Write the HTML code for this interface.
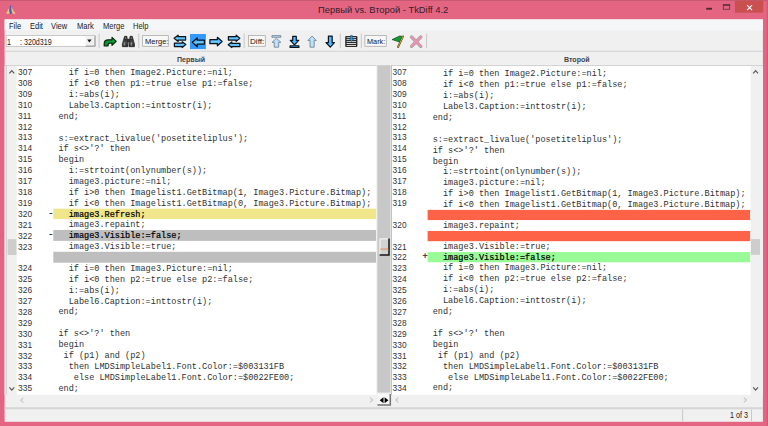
<!DOCTYPE html>
<html lang="ru">
<head>
<meta charset="utf-8">
<title>Первый vs. Второй - TkDiff 4.2</title>
<style>
*{box-sizing:border-box;margin:0;padding:0}
html,body{width:768px;height:426px;overflow:hidden}
body{position:relative;background:#e46582;font-family:"Liberation Sans",sans-serif;color:#000}
.abs,.row,.ln,.mi,.lt,svg{position:absolute}
#bg{left:0;top:0}
#title{left:-0.8px;top:5px;width:768px;text-align:center;font-size:9.35px;line-height:11px;color:#33202a;white-space:nowrap}
.mi{top:21.2px;font-size:8.5px;line-height:10px;white-space:nowrap;color:#1a1a1a;transform:scaleX(.885);transform-origin:0 0}
.lt{top:36.5px;font-size:8px;line-height:9.5px;color:#14141c;white-space:nowrap;transform-origin:0 0}
.ct{top:36.7px;font-size:8.3px;line-height:10px;white-space:pre;color:#1a1a1a;transform:scaleX(.86);transform-origin:0 0}
.hdr{top:54.9px;font-size:7.6px;line-height:10px;font-weight:bold;color:#444;white-space:nowrap;transform:scaleX(.93);transform-origin:0 0}
.row{left:0;width:100%;height:10.905px;padding-top:1.2px;line-height:10.905px;font-family:"Liberation Mono",monospace;font-size:8.550px;white-space:pre;color:#303030}
.row.hl{color:#000;-webkit-text-stroke:0.22px #000}
#lcode{left:53.3px;top:0;width:322.8px;height:426px;overflow:hidden}
#rcode{left:427.6px;top:0;width:322.5px;height:426px;overflow:hidden}
.ln{font-size:8.35px;letter-spacing:.12px;line-height:10.905px;height:10.905px;color:#333;white-space:nowrap}
.mk{font-family:"Liberation Mono",monospace;font-size:8.550px;line-height:10.905px;height:10.905px;color:#111;-webkit-text-stroke:0.2px #111}
#status{left:730px;top:411.2px;font-size:8.2px;line-height:10px;color:#1a1a1a;white-space:nowrap;transform:scaleX(.88);transform-origin:0 0}
</style>
</head>
<body>
<svg id="bg" width="768" height="426" viewBox="0 0 768 426">
<!-- window frame -->
<rect width="768" height="426" fill="#e46582"/>
<rect width="768" height="0.8" fill="#c2556f"/>
<rect x="766.7" width="1.3" height="426" fill="#cf5b76"/>
<!-- app icon -->
<path d="M11.4 4.4 C9.2 6.6 8.6 10 9.8 13.7 L12.1 13.7 C10.6 10.4 10.6 7.2 11.4 4.4Z" fill="#3560c8"/>
<path d="M9.3 7.6 L6 13.7 L9.6 13.7 C9 11.6 8.9 9.6 9.3 7.6Z" fill="#efc57c"/>
<path d="M11.7 7 C11.6 9.4 12 11.6 12.7 13.7 L15.6 13.7 C13.8 11.6 12.5 9.4 11.7 7Z" fill="#efc57c"/>
<!-- caption buttons -->
<rect x="706.2" y="7.8" width="5.8" height="1.9" fill="#4e2a36"/>
<rect x="723.3" y="4.95" width="6.4" height="4.3" fill="none" stroke="#5a3040" stroke-width="0.8"/>
<rect x="722.9" y="4.2" width="7.2" height="1.5" fill="#5a3040"/>
<rect x="734.9" y="0.8" width="28.3" height="11.9" fill="#c9504f"/>
<path d="M747.1 5.1 L752.1 10.1 M752.1 5.1 L747.1 10.1" stroke="#fff" stroke-width="1.05" fill="none"/>
<!-- client -->
<rect x="4.6" y="19.4" width="758.3" height="402.4" fill="#f0f0f0"/>
<rect x="4.6" y="19.4" width="758.3" height="11.1" fill="#f5f6f7"/>
<!-- combobox -->
<rect x="6.2" y="35.5" width="89" height="11" fill="#fff" stroke="#bdbdbd" stroke-width="0.8"/>
<rect x="85.6" y="36.2" width="9.2" height="9.8" fill="#f0f0f0"/>
<path d="M85.8 46.1 H94.9 V36.2" stroke="#8c8c8c" stroke-width="0.9" fill="none"/>
<path d="M87.2 39.6 H91.6 L89.4 42.4Z" fill="#111"/>
<!-- toolbar separators -->
<g fill="#cbcbcb">
<rect x="98.6" y="33.6" width="1.1" height="14.6"/><rect x="138.2" y="33.6" width="1.1" height="14.6"/>
<rect x="243.6" y="33.6" width="1.1" height="14.6"/><rect x="339.8" y="33.6" width="1.1" height="14.6"/>
<rect x="360.8" y="33.6" width="1.1" height="14.6"/><rect x="426" y="33.6" width="1.1" height="14.6"/>
</g>
<!-- toolbar labels -->
<g fill="#f8f8f8" stroke="#ababab" stroke-width="0.8">
<rect x="142.6" y="35.6" width="25.7" height="10.7"/>
<rect x="248.5" y="35.6" width="16.8" height="10.7"/>
<rect x="364.9" y="35.6" width="21.4" height="10.7"/>
</g>
<!-- selected button -->
<rect x="190" y="34" width="15.9" height="15.1" fill="#3399ff"/>
<defs>
<linearGradient id="gb" x1="0" y1="0" x2="0" y2="1"><stop offset="0" stop-color="#1f9cf0"/><stop offset=".5" stop-color="#6cc8ff"/><stop offset="1" stop-color="#1f9cf0"/></linearGradient>
<linearGradient id="gv" x1="0" y1="0" x2="1" y2="0"><stop offset="0" stop-color="#1f9cf0"/><stop offset=".5" stop-color="#58bcff"/><stop offset="1" stop-color="#1f9cf0"/></linearGradient>
<linearGradient id="gl" x1="0" y1="0" x2="1" y2="0"><stop offset="0" stop-color="#93ccf6"/><stop offset=".5" stop-color="#bfe4ff"/><stop offset="1" stop-color="#93ccf6"/></linearGradient>
<linearGradient id="gg" x1="0" y1="0" x2="0" y2="1"><stop offset="0" stop-color="#15b040"/><stop offset="1" stop-color="#0a8026"/></linearGradient>
<linearGradient id="gk" x1="0" y1="0" x2="0" y2="1"><stop offset="0" stop-color="#1c1c1c"/><stop offset=".6" stop-color="#4a4a4a"/><stop offset="1" stop-color="#222"/></linearGradient>
</defs>
<!-- green redo arrow -->
<path d="M104.2 46 L104.2 43.6 C104.2 41 106 39.8 108.4 39.8 L112 39.8 L112 37.4 L116.2 41.4 L112 45.4 L112 43.1 L109.8 43.1 C108.4 43.1 108 43.9 108 46 Z" fill="url(#gg)" stroke="#06260c" stroke-width="1.15" stroke-linejoin="round"/>
<!-- binoculars -->
<g fill="url(#gk)" stroke="#1a1a1a" stroke-width="0.6" stroke-linejoin="round">
<path d="M124.6 36.3 L126.9 36.3 L127.2 38.4 L127.9 40.5 L127.9 46.7 L122.3 46.7 L122.3 44 L123.9 38.4 Z"/>
<path d="M132.3 36.3 L130 36.3 L129.7 38.4 L129 40.5 L129 46.7 L134.5 46.7 L134.5 44 L132.9 38.4 Z"/>
<rect x="127.6" y="39.2" width="1.7" height="2.6"/>
</g>
<rect x="123.7" y="42.4" width="1.5" height="3.2" fill="#8e8e8e"/><rect x="130.6" y="42.4" width="1.5" height="3.2" fill="#8e8e8e"/>
<rect x="125.2" y="37" width="1" height="2" fill="#777"/><rect x="130.7" y="37" width="1" height="2" fill="#777"/>
<!-- merge icons -->
<g stroke="#0a141e" stroke-width="1.25" stroke-linejoin="round" fill="url(#gb)">
<path d="M174.1 38.25 L178.1 35.2 L178.1 36.6 L185.6 36.6 L185.6 40 L178.1 40 L178.1 41.4 Z"/>
<path d="M185.8 44.6 L182.2 41.8 L182.2 43 L174.4 43 L174.4 46.5 L182.2 46.5 L182.2 47.5 Z"/>
<path d="M192.4 42.3 L197.2 38 L197.2 40.2 L204.4 40.2 L204.4 44.2 L197.2 44.2 L197.2 46.8 Z"/>
<path d="M222.1 41.5 L217.4 37.3 L217.4 39.6 L209.9 39.6 L209.9 43.7 L217.4 43.7 L217.4 45.8 Z"/>
<path d="M239.8 38.25 L236.2 35.2 L236.2 36.6 L228.4 36.6 L228.4 40 L236.2 40 L236.2 41.4 Z"/>
<path d="M228.2 44.8 L231.8 42 L231.8 43.3 L239.9 43.3 L239.9 46.6 L231.8 46.6 L231.8 47.5 Z"/>
</g>
<!-- diff nav icons -->
<g stroke="#7f8e9c" stroke-width="0.95" stroke-linejoin="round" fill="url(#gl)">
<rect x="271.9" y="35.6" width="9" height="1.7"/>
<path d="M276.4 38.3 L280.9 42.4 L278.7 42.4 L278.7 47.2 L274.2 47.2 L274.2 42.4 L272 42.4 Z"/>
<path d="M312.1 36 L316.3 40.5 L314.2 40.5 L314.2 47.2 L310 47.2 L310 40.5 L307.8 40.5 Z"/>
</g>
<g stroke="#0a141e" stroke-width="1.2" stroke-linejoin="round" fill="url(#gv)">
<path d="M292.7 36.4 L296.3 36.4 L296.3 40.4 L298.7 40.4 L294.5 44.9 L290.3 40.4 L292.7 40.4 Z"/>
<rect x="290.1" y="45.8" width="8.8" height="1.7"/>
<path d="M328.4 36.1 L332.2 36.1 L332.2 42.7 L334.4 42.7 L330.3 47.2 L326 42.7 L328.4 42.7 Z"/>
</g>
<!-- center current diff -->
<rect x="345.2" y="36.1" width="12.2" height="10.8" rx="1" fill="#2b2b2b"/>
<g fill="#e8e8e8"><rect x="346.6" y="37.3" width="9.4" height="0.8"/><rect x="346.6" y="39.2" width="9.4" height="0.8"/><rect x="346.6" y="41.1" width="9.4" height="0.8"/><rect x="346.6" y="43" width="9.4" height="0.9"/><rect x="346.6" y="45" width="9.4" height="0.9"/></g>
<path d="M350.6 35.4 L352.3 35.4 L352.3 38.6 L353.9 38.6 L351.5 41.5 L349.2 38.6 L350.6 38.6 Z" fill="#2aa2f4" stroke="#103a5a" stroke-width="0.5"/>
<!-- flag -->
<path d="M402.4 36.4 L399.6 36 L392.1 39.6 L400.2 42.2 Z" fill="#129a34" stroke="#0a4a1a" stroke-width="0.7" stroke-linejoin="round"/>
<path d="M403 36.4 L398 47" stroke="#4a3a10" stroke-width="1.9" stroke-linecap="round"/>
<path d="M403 36.4 L398 47" stroke="#e2b844" stroke-width="0.9" stroke-linecap="round"/>
<!-- pink X -->
<path d="M411.6 37 L420.8 46.3 M420.8 37 L411.6 46.3" stroke="#93a89a" stroke-width="3.3" stroke-linecap="round"/>
<path d="M411.6 37 L420.8 46.3 M420.8 37 L411.6 46.3" stroke="#f28fb2" stroke-width="2.2" stroke-linecap="round"/>

<!-- toolbar bottom line -->
<rect x="4.6" y="50.7" width="758.3" height="1.3" fill="#d9d9d9"/>
<!-- scrollbars and panes -->
<rect x="4.6" y="65.3" width="758.3" height="0.8" fill="#c6c6c6"/>
<rect x="4.6" y="66.2" width="12.1" height="328.6" fill="#f0f0f0"/>
<rect x="6" y="65.3" width="0.8" height="329.5" fill="#cfcfcf"/>
<rect x="16.7" y="66.1" width="359.6" height="328.7" fill="#fff"/>
<rect x="391.1" y="65.3" width="0.9" height="329.5" fill="#bcbcbc"/>
<rect x="392" y="66.1" width="358.8" height="328.7" fill="#fff"/>
<rect x="750.8" y="66.2" width="12.1" height="328.6" fill="#f0f0f0"/>
<rect x="376.3" y="65.3" width="14.8" height="0.9" fill="#f0f0f0"/>
<rect x="7.6" y="239.2" width="8.8" height="15.8" fill="#cdcdcd"/>
<rect x="750.9" y="239.1" width="9.1" height="15.7" fill="#cdcdcd"/>
<!-- diff map -->
<rect x="377.3" y="65.3" width="13.1" height="327.3" fill="#c8c8c8"/>
<rect x="379.6" y="238.5" width="10.1" height="17.2" fill="#d2d2d2"/>
<path d="M380 255.2 V238.9 H389.2" stroke="#fff" stroke-width="0.9" fill="none"/>
<path d="M379.6 255 H389 V238.5" stroke="#151515" stroke-width="1.5" fill="none"/>
<rect x="380.5" y="248.5" width="7.7" height="1.2" fill="#ee8272"/>
<rect x="380.5" y="249.7" width="7.7" height="0.9" fill="#b7d9a0"/>
<!-- highlights -->
<rect x="53.3" y="208.67" width="322.8" height="10.40" fill="#f0e68c"/>
<rect x="53.3" y="229.97" width="322.8" height="10.90" fill="#bebebe"/>
<rect x="53.3" y="251.78" width="322.8" height="10.90" fill="#bebebe"/>
<rect x="427.6" y="209.87" width="322.5" height="10.20" fill="#ff6347"/>
<rect x="427.6" y="230.97" width="322.5" height="10.20" fill="#ff6347"/>
<rect x="427.6" y="252.07" width="322.5" height="10.20" fill="#98fb98"/>
<!-- scrollbar chevrons -->
<g stroke="#555" stroke-width="1.1" fill="none">
<path d="M9.4 73.4 L11.8 70.6 L14.2 73.4"/>
<path d="M9.4 387.4 L11.8 390.2 L14.2 387.4"/>
<path d="M753.2 73.4 L755.6 70.6 L758 73.4"/>
<path d="M753.2 387.4 L755.6 390.2 L758 387.4"/>
</g>
<g stroke="#c6c6c6" stroke-width="1.1" fill="none">
<path d="M23.4 397.8 L20.8 400.2 L23.4 402.6"/>
<path d="M370 397.6 L372.6 400 L370 402.4"/>
<path d="M398.4 397.6 L395.8 400 L398.4 402.4"/>
<path d="M743.8 397.6 L746.4 400 L743.8 402.4"/>
</g>
<!-- middle button -->
<rect x="377.5" y="394" width="13.5" height="11.6" fill="#f6f6f6"/>
<path d="M377.5 404.9 H390.3 V394" stroke="#757575" stroke-width="1.5" fill="none"/>
<path d="M379.7 400.2 L383.5 397.2 V403.2Z M388.4 400.2 L384.6 397.2 V403.2Z" fill="#000"/>
<!-- status bar -->
<rect x="4.6" y="407.2" width="758.3" height="2.1" fill="#d6d6d6"/>
<rect x="682.2" y="409.4" width="0.9" height="11.8" fill="#c4c4c4"/>
<rect x="751" y="409.4" width="0.9" height="11.8" fill="#c4c4c4"/>
</svg>

<div class="abs" id="title">Первый vs. Второй - TkDiff 4.2</div>

<div class="mi" style="left:8.7px">File</div>
<div class="mi" style="left:29.6px">Edit</div>
<div class="mi" style="left:50.8px">View</div>
<div class="mi" style="left:76.6px">Mark</div>
<div class="mi" style="left:103px">Merge</div>
<div class="mi" style="left:133.2px">Help</div>

<div class="ct abs" style="left:7.4px">1</div><div class="ct abs" style="left:20.4px">: 320d319</div>
<div class="lt" style="left:144.5px;transform:scaleX(.945)">Merge:</div>
<div class="lt" style="left:250px;transform:scaleX(1.01)">Diff:</div>
<div class="lt" style="left:367px;transform:scaleX(.915)">Mark:</div>

<div class="hdr abs" style="left:177.4px">Первый</div>
<div class="hdr abs" style="left:563.6px">Второй</div>

<div class="abs" id="lcode">
<div class="row" style="top:66.90px;">   if i=0 then Image2.Picture:=nil;</div>
<div class="row" style="top:77.81px;">   if i&lt;0 then p1:=true else p1:=false;</div>
<div class="row" style="top:88.71px;">   i:=abs(i);</div>
<div class="row" style="top:99.62px;">   Label3.Caption:=inttostr(i);</div>
<div class="row" style="top:110.52px;"> end;</div>
<div class="row" style="top:121.43px;"></div>
<div class="row" style="top:132.33px;"> s:=extract_livalue('posetiteliplus');</div>
<div class="row" style="top:143.24px;"> if s&lt;&gt;'?' then</div>
<div class="row" style="top:154.14px;"> begin</div>
<div class="row" style="top:165.05px;">   i:=strtoint(onlynumber(s));</div>
<div class="row" style="top:175.95px;">   image3.picture:=nil;</div>
<div class="row" style="top:186.86px;">   if i&gt;0 then Imagelist1.GetBitmap(1, Image3.Picture.Bitmap);</div>
<div class="row" style="top:197.76px;">   if i&lt;0 then Imagelist1.GetBitmap(0, Image3.Picture.Bitmap);</div>
<div class="row hl" style="top:208.67px;">   image3.Refresh;</div>
<div class="row" style="top:219.07px;">   image3.repaint;</div>
<div class="row hl" style="top:229.97px;">   image3.Visible:=false;</div>
<div class="row" style="top:240.88px;">   image3.Visible:=true;</div>
<div class="row hl" style="top:251.78px;"></div>
<div class="row" style="top:262.69px;">   if i=0 then Image3.Picture:=nil;</div>
<div class="row" style="top:273.59px;">   if i&lt;0 then p2:=true else p2:=false;</div>
<div class="row" style="top:284.49px;">   i:=abs(i);</div>
<div class="row" style="top:295.40px;">   Label6.Caption:=inttostr(i);</div>
<div class="row" style="top:306.30px;"> end;</div>
<div class="row" style="top:317.21px;"></div>
<div class="row" style="top:328.11px;"> if s&lt;&gt;'?' then</div>
<div class="row" style="top:339.02px;"> begin</div>
<div class="row" style="top:349.92px;">  if (p1) and (p2)</div>
<div class="row" style="top:360.83px;">   then LMDSimpleLabel1.Font.Color:=$003131FB</div>
<div class="row" style="top:371.73px;">    else LMDSimpleLabel1.Font.Color:=$0022FE00;</div>
<div class="row" style="top:382.64px;"> end;</div>
</div>
<div class="abs" id="rcode">
<div class="row" style="top:68.10px;">   if i=0 then Image2.Picture:=nil;</div>
<div class="row" style="top:79.00px;">   if i&lt;0 then p1:=true else p1:=false;</div>
<div class="row" style="top:89.91px;">   i:=abs(i);</div>
<div class="row" style="top:100.81px;">   Label3.Caption:=inttostr(i);</div>
<div class="row" style="top:111.72px;"> end;</div>
<div class="row" style="top:122.62px;"></div>
<div class="row" style="top:133.53px;"> s:=extract_livalue('posetiteliplus');</div>
<div class="row" style="top:144.44px;"> if s&lt;&gt;'?' then</div>
<div class="row" style="top:155.34px;"> begin</div>
<div class="row" style="top:166.25px;">   i:=strtoint(onlynumber(s));</div>
<div class="row" style="top:177.15px;">   image3.picture:=nil;</div>
<div class="row" style="top:188.06px;">   if i&gt;0 then Imagelist1.GetBitmap(1, Image3.Picture.Bitmap);</div>
<div class="row" style="top:198.96px;">   if i&lt;0 then Imagelist1.GetBitmap(0, Image3.Picture.Bitmap);</div>
<div class="row hl" style="top:209.87px;"></div>
<div class="row" style="top:220.06px;">   image3.repaint;</div>
<div class="row hl" style="top:230.97px;"></div>
<div class="row" style="top:241.17px;">   image3.Visible:=true;</div>
<div class="row hl" style="top:252.07px;">   image3.Visible:=false;</div>
<div class="row" style="top:262.27px;">   if i=0 then Image3.Picture:=nil;</div>
<div class="row" style="top:273.18px;">   if i&lt;0 then p2:=true else p2:=false;</div>
<div class="row" style="top:284.08px;">   i:=abs(i);</div>
<div class="row" style="top:294.99px;">   Label6.Caption:=inttostr(i);</div>
<div class="row" style="top:305.89px;"> end;</div>
<div class="row" style="top:316.80px;"></div>
<div class="row" style="top:327.70px;"> if s&lt;&gt;'?' then</div>
<div class="row" style="top:338.61px;"> begin</div>
<div class="row" style="top:349.51px;">  if (p1) and (p2)</div>
<div class="row" style="top:360.42px;">   then LMDSimpleLabel1.Font.Color:=$003131FB</div>
<div class="row" style="top:371.32px;">    else LMDSimpleLabel1.Font.Color:=$0022FE00;</div>
<div class="row" style="top:382.23px;"> end;</div>
</div>
<div class="ln" style="top:67.05px;left:17.9px">307</div>
<div class="ln" style="top:77.95px;left:17.9px">308</div>
<div class="ln" style="top:88.86px;left:17.9px">309</div>
<div class="ln" style="top:99.76px;left:17.9px">310</div>
<div class="ln" style="top:110.67px;left:17.9px">311</div>
<div class="ln" style="top:121.57px;left:17.9px">312</div>
<div class="ln" style="top:132.48px;left:17.9px">313</div>
<div class="ln" style="top:143.38px;left:17.9px">314</div>
<div class="ln" style="top:154.29px;left:17.9px">315</div>
<div class="ln" style="top:165.19px;left:17.9px">316</div>
<div class="ln" style="top:176.10px;left:17.9px">317</div>
<div class="ln" style="top:187.00px;left:17.9px">318</div>
<div class="ln" style="top:197.91px;left:17.9px">319</div>
<div class="ln" style="top:208.81px;left:17.9px">320</div>
<div class="ln" style="top:219.72px;left:17.9px">321</div>
<div class="ln" style="top:230.62px;left:17.9px">322</div>
<div class="ln" style="top:241.53px;left:17.9px">323</div>
<div class="ln" style="top:263.34px;left:17.9px">324</div>
<div class="ln" style="top:274.25px;left:17.9px">325</div>
<div class="ln" style="top:285.15px;left:17.9px">326</div>
<div class="ln" style="top:296.06px;left:17.9px">327</div>
<div class="ln" style="top:306.96px;left:17.9px">328</div>
<div class="ln" style="top:317.87px;left:17.9px">329</div>
<div class="ln" style="top:328.77px;left:17.9px">330</div>
<div class="ln" style="top:339.68px;left:17.9px">331</div>
<div class="ln" style="top:350.58px;left:17.9px">332</div>
<div class="ln" style="top:361.49px;left:17.9px">333</div>
<div class="ln" style="top:372.39px;left:17.9px">334</div>
<div class="ln" style="top:383.30px;left:17.9px">335</div>
<div class="ln" style="top:67.05px;left:392.5px">307</div>
<div class="ln" style="top:77.95px;left:392.5px">308</div>
<div class="ln" style="top:88.86px;left:392.5px">309</div>
<div class="ln" style="top:99.76px;left:392.5px">310</div>
<div class="ln" style="top:110.67px;left:392.5px">311</div>
<div class="ln" style="top:121.57px;left:392.5px">312</div>
<div class="ln" style="top:132.48px;left:392.5px">313</div>
<div class="ln" style="top:143.38px;left:392.5px">314</div>
<div class="ln" style="top:154.29px;left:392.5px">315</div>
<div class="ln" style="top:165.19px;left:392.5px">316</div>
<div class="ln" style="top:176.10px;left:392.5px">317</div>
<div class="ln" style="top:187.00px;left:392.5px">318</div>
<div class="ln" style="top:197.91px;left:392.5px">319</div>
<div class="ln" style="top:219.72px;left:392.5px">320</div>
<div class="ln" style="top:241.53px;left:392.5px">321</div>
<div class="ln" style="top:252.44px;left:392.5px">322</div>
<div class="ln" style="top:263.34px;left:392.5px">323</div>
<div class="ln" style="top:274.25px;left:392.5px">324</div>
<div class="ln" style="top:285.15px;left:392.5px">325</div>
<div class="ln" style="top:296.06px;left:392.5px">326</div>
<div class="ln" style="top:306.96px;left:392.5px">327</div>
<div class="ln" style="top:317.87px;left:392.5px">328</div>
<div class="ln" style="top:328.77px;left:392.5px">329</div>
<div class="ln" style="top:339.68px;left:392.5px">330</div>
<div class="ln" style="top:350.58px;left:392.5px">331</div>
<div class="ln" style="top:361.49px;left:392.5px">332</div>
<div class="ln" style="top:372.39px;left:392.5px">333</div>
<div class="ln" style="top:383.30px;left:392.5px">334</div>
<div class="mk abs" style="left:48.2px;top:208.6px">-</div>
<div class="mk abs" style="left:48.2px;top:230px">-</div>
<div class="mk abs" style="left:422.4px;top:252.1px">+</div>

<div class="abs" id="status">1 of 3</div>
</body>
</html>
